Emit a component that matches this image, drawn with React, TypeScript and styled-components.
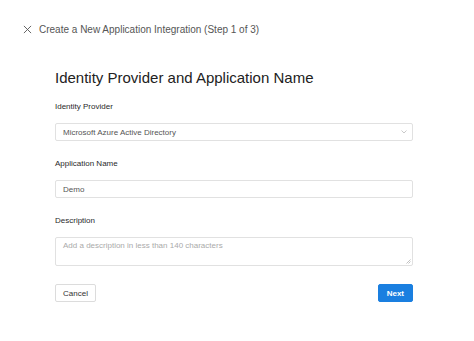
import React from "react"
import styled, { createGlobalStyle } from "styled-components"

const GlobalStyle = createGlobalStyle`
  html, body {
    margin: 0;
    padding: 0;
    background: #ffffff;
  }
  body {
    font-family: "Liberation Sans", Arial, sans-serif;
    color: #333;
  }
`

const Page = styled.div`
  width: 474px;
  height: 341px;
  box-sizing: border-box;
  padding: 23px 0 0 23px;
`

const Header = styled.div`
  display: flex;
  align-items: center;
  gap: 7px;
  height: 12px;
  font-size: 10px;
  color: #555;
`

const CloseIcon = styled.svg`
  width: 9px;
  height: 9px;
  flex: none;
`

const Form = styled.div`
  margin: 34px 0 0 32px;
  width: 358px;
  display: flex;
  flex-direction: column;
`

const Title = styled.h1`
  margin: 0;
  font-size: 15px;
  font-weight: 400;
  color: #222;
  line-height: 18px;
`

const Label = styled.div`
  font-size: 8px;
  color: #2a2a2a;
  line-height: 10px;
  margin-top: ${p => (p.$first ? "15px" : "18px")};
  margin-bottom: 11px;
`

const Field = styled.div`
  box-sizing: border-box;
  height: ${p => p.$height || 18}px;
  border: 1px solid #e1e1e1;
  border-radius: 2px;
  display: flex;
  align-items: ${p => (p.$multi ? "flex-start" : "center")};
  padding: ${p => (p.$multi ? "3px 7px" : "0 7px")};
  font-size: 8px;
  color: ${p => (p.$muted ? "#aaa" : "#555")};
  position: relative;
`

const FieldText = styled.span`
  flex: 1;
`

const Chevron = styled.svg`
  width: 6px;
  height: 4px;
  flex: none;
  margin-right: -2px;
`

const Grip = styled.svg`
  position: absolute;
  right: 1px;
  bottom: 1px;
  width: 5px;
  height: 5px;
`

const Actions = styled.div`
  display: flex;
  justify-content: space-between;
  margin-top: 18px;
`

const Button = styled.button`
  box-sizing: border-box;
  height: 18px;
  padding: 0 ${p => (p.$primary ? "8px" : "7px")};
  border-radius: 2px;
  font-family: "Liberation Sans", Arial, sans-serif;
  font-size: 8px;
  border: 1px solid ${p => (p.$primary ? "#1a7fe0" : "#dcdcdc")};
  background: ${p => (p.$primary ? "#1a7fe0" : "#fff")};
  color: ${p => (p.$primary ? "#fff" : "#333")};
  font-weight: ${p => (p.$primary ? 700 : 400)};
`

export default function App() {
  return (
    <>
      <GlobalStyle />
      <Page>
        <Header>
          <CloseIcon viewBox="0 0 10 10">
            <path d="M1 1 L9 9 M9 1 L1 9" stroke="#555" strokeWidth="1" fill="none" />
          </CloseIcon>
          <span>Create a New Application Integration (Step 1 of 3)</span>
        </Header>
        <Form>
          <Title>Identity Provider and Application Name</Title>
          <Label $first>Identity Provider</Label>
          <Field>
            <FieldText>Microsoft Azure Active Directory</FieldText>
            <Chevron viewBox="0 0 6 4">
              <path d="M0.5 0.5 L3 3 L5.5 0.5" stroke="#bbb" strokeWidth="0.8" fill="none" />
            </Chevron>
          </Field>
          <Label>Application Name</Label>
          <Field>
            <FieldText>Demo</FieldText>
          </Field>
          <Label>Description</Label>
          <Field $height={29} $multi $muted>
            <FieldText>Add a description in less than 140 characters</FieldText>
            <Grip viewBox="0 0 5 5">
              <path d="M4.5 0.5 L0.5 4.5 M4.5 2.5 L2.5 4.5" stroke="#999" strokeWidth="0.6" />
            </Grip>
          </Field>
          <Actions>
            <Button>Cancel</Button>
            <Button $primary>Next</Button>
          </Actions>
        </Form>
      </Page>
    </>
  )
}
